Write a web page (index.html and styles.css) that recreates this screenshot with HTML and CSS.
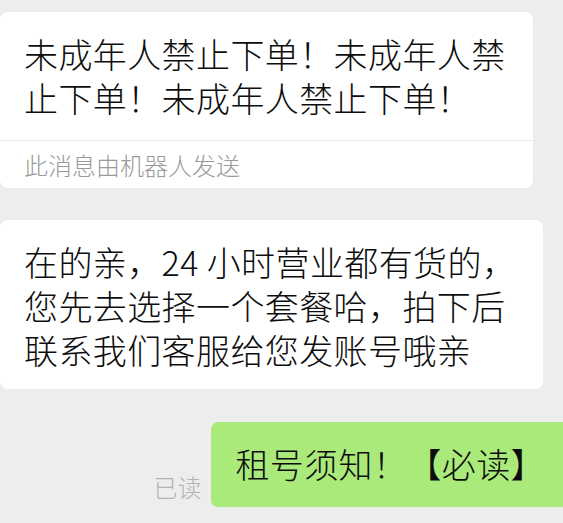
FILE: index.html
```html
<!DOCTYPE html>
<html lang="zh-CN">
<head>
    <meta charset="UTF-8">
    <meta name="viewport" content="width=device-width, initial-scale=1.0">
    <title>聊天</title>
    <link rel="stylesheet" href="styles.css">
</head>
<body>
    <div class="chat">
        <div class="bubble bot">
            <p class="msg">未成年人禁止下单！未成年人禁止下单！未成年人禁止下单！</p>
            <div class="bot-note">此消息由机器人发送</div>
        </div>

        <div class="bubble reply">
            <p class="msg">在的亲，24 小时营业都有货的，您先去选择一个套餐哈，拍下后联系我们客服给您发账号哦亲</p>
        </div>

        <div class="row-self">
            <span class="read">已读</span>
            <div class="bubble self">
                <p class="msg">租号须知！【必读】</p>
            </div>
        </div>
    </div>
</body>
</html>
```

FILE: styles.css
```css
body {
    margin: 0;
    background: #ededed;
    font-family: "Noto Sans CJK SC", "Noto Sans", sans-serif;
    font-weight: 300;
    overflow: hidden;
}

.chat {
    display: flex;
    flex-direction: column;
    padding-top: 12px;
}

.bubble {
    background: #ffffff;
    border-radius: 8px;
    box-sizing: border-box;
}

.msg {
    margin: 0;
    font-size: 34px;
    line-height: 44px;
    letter-spacing: 0.4px;
    color: #0d0d0d;
}

.bot {
    width: 533px;
}

.bot .msg {
    padding: 20px 24px 20px;
}

.bot-note {
    border-top: 1px solid #ededed;
    padding: 12px 24px 11px;
    font-size: 24px;
    line-height: 24px;
    color: #9a9a9a;
}

.reply {
    width: 543px;
    margin-top: 32px;
}

.reply .msg {
    padding: 20px 24px 17px;
}

.row-self {
    display: flex;
    justify-content: flex-end;
    align-items: flex-end;
    margin-top: 33px;
    margin-right: -6px;
}

.read {
    font-size: 24px;
    line-height: 24px;
    color: #b2b2b2;
    margin: 0 10px 8px 0;
}

.self {
    background: #a9ea7a;
    border-radius: 7px;
}

.self .msg {
    padding: 20px 24px 21px;
    white-space: nowrap;
}
```
